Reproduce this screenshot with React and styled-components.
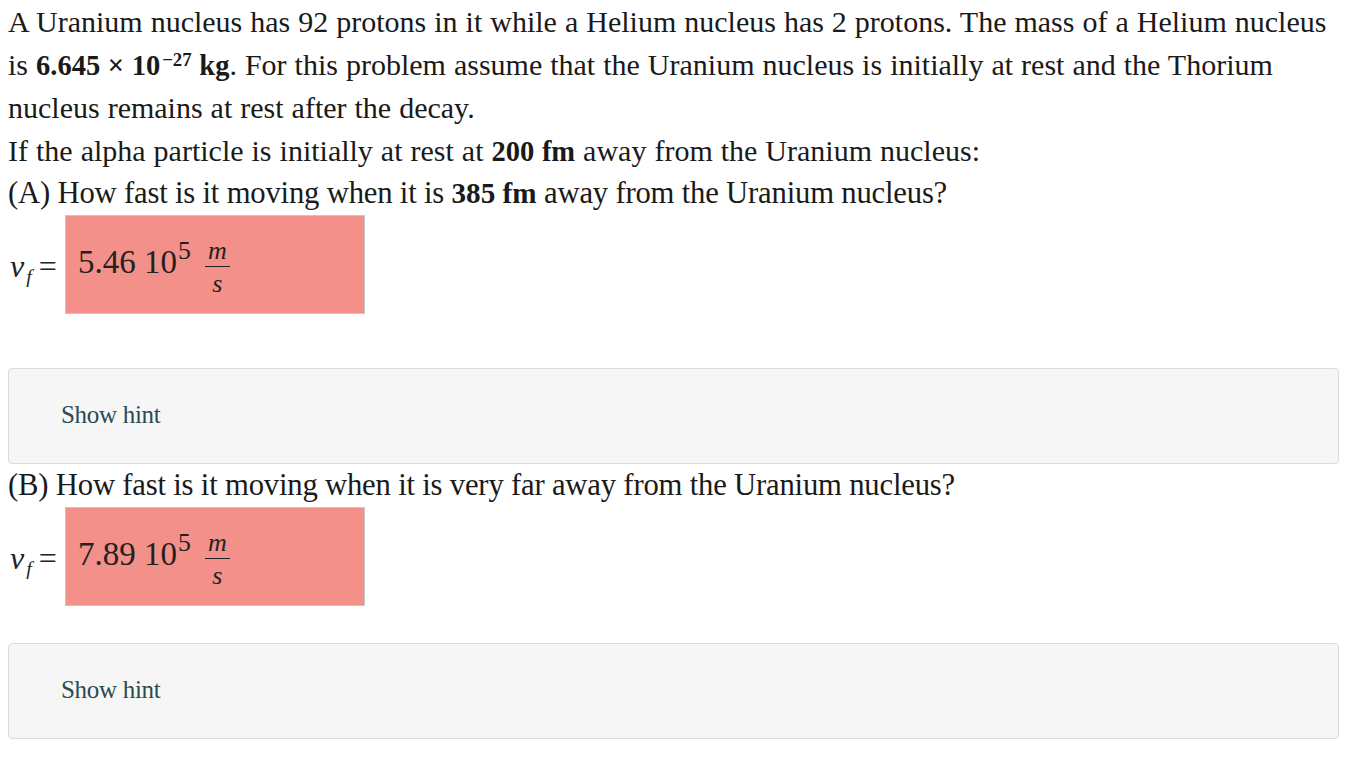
import React from "react";
import styled, { createGlobalStyle } from "styled-components";

const Global = createGlobalStyle`
  html, body { padding: 0; background: #fff; }
  body { margin: 0 8px; font-family: "Liberation Serif", "Times New Roman", serif; color: #1a1a1a; }
`;

const Page = styled.div`
  width: 1341px;
`;

const Prose = styled.div`
  width: 1325px;
`;

const Para = styled.p`
  margin: 0;
  font-size: 30px;
  line-height: 43px;
  letter-spacing: 0;
  word-spacing: 0.5px;
`;

const Question = styled.h3`
  margin: 0;
  font-weight: normal;
  font-size: 30.7px;
  line-height: 43px;
  letter-spacing: -0.2px;
`;

const MathBold = styled.span`
  font-family: "Liberation Serif", serif;
  font-weight: bold;
  font-size: 0.95em;
  line-height: 1;
  letter-spacing: 0;
`;

const Sup = styled.sup`
  font-size: 0.66em;
  line-height: 0;
  vertical-align: 0;
  position: relative;
  top: -0.5em;
  margin-left: 2px;
`;

const AnswerRow = styled.div`
  display: flex;
  align-items: center;
  margin-top: ${(p) => p.$top}px;
`;

const Label = styled.div`
  width: 57px;
  display: flex;
  align-items: baseline;
  font-family: "Liberation Serif", serif;
  font-size: 32px;
  color: #222;
  padding-top: 4px;
`;

const Var = styled.i`
  font-family: "Liberation Serif", serif;
  font-style: italic;
  margin-left: 2px;
`;

const Sub = styled.i`
  font-family: "Liberation Serif", serif;
  font-style: italic;
  font-size: 0.62em;
  position: relative;
  top: 0.3em;
  margin-left: 2px;
`;

const Eq = styled.span`
  margin-left: 7px;
`;

const AnswerBox = styled.div`
  box-sizing: border-box;
  width: 300px;
  height: 99px;
  background: #f3908a;
  border: 1px solid #c8c8c8;
  display: flex;
  align-items: flex-start;
  padding: 22px 0 0 12px;
  font-family: "Liberation Serif", serif;
  font-size: 33px;
  color: #222;
`;

const Value = styled.span`
  line-height: 1;
  margin-top: 8px;
`;

const Exp = styled.span`
  font-size: 0.78em;
  position: relative;
  top: -0.55em;
  margin-left: 1px;
`;

const Frac = styled.span`
  display: inline-flex;
  flex-direction: column;
  align-items: center;
  margin-left: 14px;
  font-style: italic;
  font-size: 26px;
  line-height: 1;
`;

const Num = styled.span`
  padding: 0 3px 2px;
  border-bottom: 1.5px solid #222;
`;

const Den = styled.span`
  padding-top: 4px;
`;

const HintBox = styled.div`
  box-sizing: border-box;
  width: 1331px;
  height: 96px;
  margin-top: ${(p) => p.$top}px;
  background: #f6f6f6;
  border: 1px solid #dcdcdc;
  border-radius: 4px;
  display: flex;
  align-items: center;
  padding-left: 52px;
`;

const HintLink = styled.span`
  font-family: "Liberation Serif", serif;
  font-size: 25px;
  color: #2b4a52;
  letter-spacing: -0.3px;
  margin-top: -3px;
`;

function Answer({ value, top }) {
  return (
    <AnswerRow $top={top}>
      <Label>
        <Var>v</Var>
        <Sub>f</Sub>
        <Eq>=</Eq>
      </Label>
      <AnswerBox>
        <Value>
          {value} 10<Exp>5</Exp>
        </Value>
        <Frac>
          <Num>m</Num>
          <Den>s</Den>
        </Frac>
      </AnswerBox>
    </AnswerRow>
  );
}

export default function App() {
  return (
    <>
      <Global />
      <Page>
        <Prose>
          <Para>
            A Uranium nucleus has 92 protons in it while a Helium nucleus has 2 protons. The mass of a Helium nucleus is{" "}
            <MathBold>
              6.645 × 10<Sup>−27</Sup> kg
            </MathBold>
            . For this problem assume that the Uranium nucleus is initially at rest and the Thorium nucleus remains at
            rest after the decay.
          </Para>
          <Para>
            If the alpha particle is initially at rest at <MathBold>200 fm</MathBold> away from the Uranium nucleus:
          </Para>
          <Question>
            (A) How fast is it moving when it is <MathBold>385 fm</MathBold> away from the Uranium nucleus?
          </Question>
        </Prose>
        <Answer value="5.46" top={0} />
        <HintBox $top={54}>
          <HintLink>Show hint</HintLink>
        </HintBox>
        <Question>(B) How fast is it moving when it is very far away from the Uranium nucleus?</Question>
        <Answer value="7.89" top={0} />
        <HintBox $top={37}>
          <HintLink>Show hint</HintLink>
        </HintBox>
      </Page>
    </>
  );
}
